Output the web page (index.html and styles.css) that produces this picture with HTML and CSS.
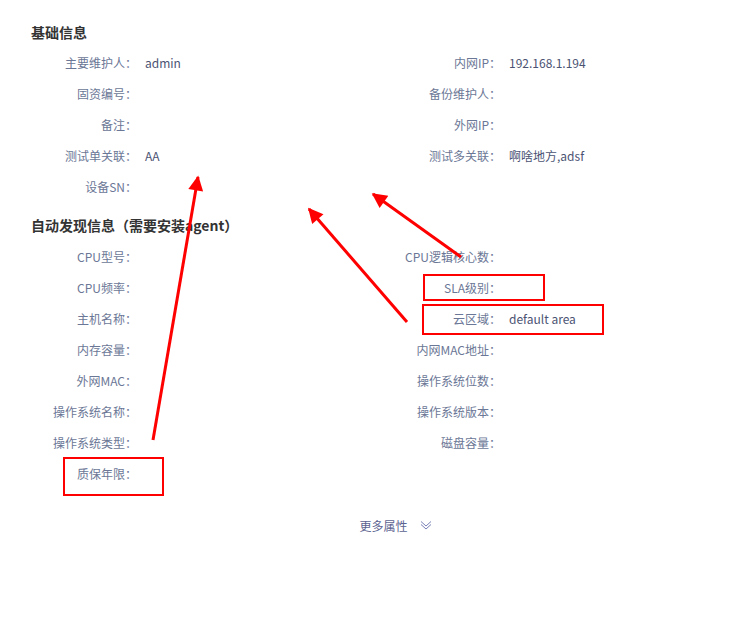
FILE: index.html
```html
<!DOCTYPE html>
<html lang="zh-CN">
<head>
<meta charset="utf-8">
<title>详情</title>
<link rel="stylesheet" href="styles.css">
</head>
<body>
<div class="page">
  <section class="section">
    <h2 class="title">基础信息</h2>
    <div class="grid">
      <div class="item"><span class="label">主要维护人：</span><span class="value">admin</span></div>
      <div class="item"><span class="label">内网IP：</span><span class="value">192.168.1.194</span></div>
      <div class="item"><span class="label">固资编号：</span><span class="value"></span></div>
      <div class="item"><span class="label">备份维护人：</span><span class="value"></span></div>
      <div class="item"><span class="label">备注：</span><span class="value"></span></div>
      <div class="item"><span class="label">外网IP：</span><span class="value"></span></div>
      <div class="item"><span class="label">测试单关联：</span><span class="value">AA</span></div>
      <div class="item"><span class="label">测试多关联：</span><span class="value">啊啥地方,adsf</span></div>
      <div class="item"><span class="label">设备SN：</span><span class="value"></span></div>
    </div>
  </section>
  <section class="section second">
    <h2 class="title">自动发现信息（需要安装agent）</h2>
    <div class="grid">
      <div class="item"><span class="label">CPU型号：</span><span class="value"></span></div>
      <div class="item"><span class="label">CPU逻辑核心数：</span><span class="value"></span></div>
      <div class="item"><span class="label">CPU频率：</span><span class="value"></span></div>
      <div class="item"><span class="label">SLA级别：</span><span class="value"></span></div>
      <div class="item"><span class="label">主机名称：</span><span class="value"></span></div>
      <div class="item"><span class="label">云区域：</span><span class="value">default area</span></div>
      <div class="item"><span class="label">内存容量：</span><span class="value"></span></div>
      <div class="item"><span class="label">内网MAC地址：</span><span class="value"></span></div>
      <div class="item"><span class="label">外网MAC：</span><span class="value"></span></div>
      <div class="item"><span class="label">操作系统位数：</span><span class="value"></span></div>
      <div class="item"><span class="label">操作系统名称：</span><span class="value"></span></div>
      <div class="item"><span class="label">操作系统版本：</span><span class="value"></span></div>
      <div class="item"><span class="label">操作系统类型：</span><span class="value"></span></div>
      <div class="item"><span class="label">磁盘容量：</span><span class="value"></span></div>
      <div class="item"><span class="label">质保年限：</span><span class="value"></span></div>
    </div>
  </section>
  <div class="more">
    <span class="more-text">更多属性</span>
    <svg class="chev" width="12" height="9" viewBox="0 0 12 9"><path d="M1 0.5 L6 5 L11 0.5 M1 3.5 L6 8 L11 3.5" fill="none" stroke="#7b82b8" stroke-width="1"/></svg>
  </div>

  <svg class="annot" width="751" height="633" viewBox="0 0 751 633">
    <defs>
      <marker id="ah" viewBox="0 0 10 10" refX="9" refY="5" markerWidth="6.5" markerHeight="5" orient="auto" markerUnits="strokeWidth">
        <path d="M0 0 L10 5 L0 10 Z" fill="#f00"/>
      </marker>
    </defs>
    <g stroke="#f00" stroke-width="3" fill="none">
      <line x1="153" y1="440" x2="198" y2="177" marker-end="url(#ah)"/>
      <line x1="407" y1="322" x2="309" y2="209" marker-end="url(#ah)"/>
      <line x1="461" y1="257" x2="373" y2="194" marker-end="url(#ah)"/>
    </g>
    <g stroke="#f00" stroke-width="2" fill="none">
      <rect x="64" y="458" width="99" height="37"/>
      <rect x="424" y="275" width="120" height="25"/>
      <rect x="423" y="305" width="180" height="29"/>
    </g>
  </svg>
</div>
</body>
</html>
```

FILE: styles.css
```css
html, body {
  margin: 0;
  padding: 0;
  background: #fff;
}
body {
  font-family: "Noto Sans CJK SC", "Noto Sans", sans-serif;
  font-size: 12px;
  overflow: hidden;
}
.page {
  position: relative;
  width: 751px;
  height: 633px;
  overflow: hidden;
  padding-top: 22px;
  box-sizing: border-box;
}
.section {
  padding-left: 31px;
}
.second {
  margin-top: 13px;
}
.title {
  margin: 0 0 5px 0;
  height: 20px;
  line-height: 20px;
  font-size: 14px;
  font-weight: bold;
  color: #333;
}
.second .title {
  margin-bottom: 6px;
}
.grid {
  display: grid;
  grid-template-columns: 364px 364px;
  grid-auto-rows: 31px;
}
.item {
  display: flex;
  align-items: center;
}
.label {
  width: 106px;
  text-align: right;
  color: #6b7796;
  white-space: nowrap;
}
.value {
  margin-left: 8px;
  color: #4b5373;
  white-space: nowrap;
}
.more {
  margin-top: 26px;
  padding-left: 31px;
  width: 729px;
  height: 20px;
  display: flex;
  align-items: center;
  justify-content: center;
  gap: 12px;
}
.more-text {
  color: #5b6390;
}
.chev {
  display: block;
}
.annot {
  position: absolute;
  left: 0;
  top: 0;
  pointer-events: none;
}
```
